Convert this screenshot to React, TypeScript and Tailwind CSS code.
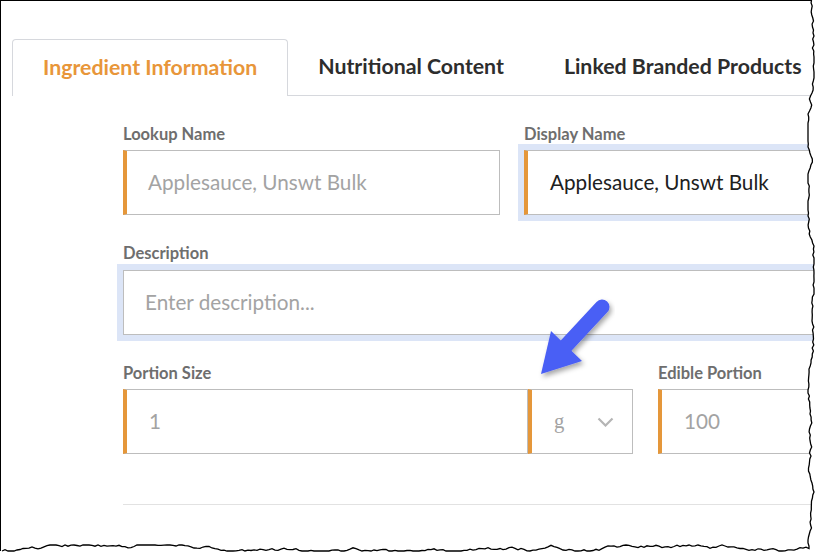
import React from "react";

function makeRng(seed: number) {
  let s = seed;
  return () => {
    s = (s * 1103515245 + 12345) & 0x7fffffff;
    return s / 0x7fffffff;
  };
}

const rnd = makeRng(11);
const rightPts: [number, number][] = [];
let v = 0;
for (let y = 0; y <= 548; y += 3) {
  v = Math.max(-3, Math.min(3, v + (rnd() - 0.5) * 3.2));
  rightPts.push([811 + v, y]);
}
const bottomPts: [number, number][] = [];
v = 0;
for (let x = rightPts[rightPts.length - 1][0]; x >= 0; x -= 3) {
  v = Math.max(-3, Math.min(3, v + (rnd() - 0.5) * 3.2));
  bottomPts.push([x, 548 + v]);
}
const edge = [...rightPts, ...bottomPts];
const edgeStr = edge.map(([x, y]) => `${x.toFixed(1)},${y.toFixed(1)}`).join(" ");
const lastBottom = bottomPts[bottomPts.length - 1];
const outsideStr = `816,0 ${edgeStr} 0,${lastBottom[1].toFixed(1)} 0,556 816,556`;

const font = { fontFamily: "Lato, 'Open Sans', sans-serif" };

function Label({ children }: { children: React.ReactNode }) {
  return (
    <div className="text-[16.5px] leading-[20px] font-bold text-[#6e6e6e] mb-[6px]">{children}</div>
  );
}

export default function App() {
  return (
    <div className="relative w-[816px] h-[556px] overflow-hidden bg-white" style={font}>
      <div className="absolute inset-0 border-t border-l border-black" />
      {/* Tabs */}
      <div className="flex pt-[39px] pl-[12px] w-[1000px]">
        <div className="h-[57px] px-[30px] flex items-center border border-b-0 border-[#d6d8dd] rounded-t-[4px] text-[21.3px] font-bold text-[#e8963a] bg-white">
          Ingredient Information
        </div>
        <div className="flex-1 flex items-center border-b border-[#d6d8dd] text-[21.3px] font-bold text-[#2d2d2d]">
          <div className="px-[30px]">Nutritional Content</div>
          <div className="px-[30px]">Linked Branded Products</div>
        </div>
      </div>

      {/* Form */}
      <div className="pl-[123px] pt-[28px] w-[1100px]">
        <div className="flex gap-[24px]">
          <div className="w-[377px]">
            <Label>Lookup Name</Label>
            <div className="h-[65px] border border-[#bdbdbd] border-l-4 border-l-[#e5973a] flex items-center pl-[21px] text-[20.7px] text-[#a3a3a3]">
              Applesauce, Unswt Bulk
            </div>
          </div>
          <div className="w-[377px]">
            <Label>Display Name</Label>
            <div className="h-[65px] border border-[#bdbdbd] border-l-4 border-l-[#e5973a] ring-[6px] ring-[#dce5f7] flex items-center pl-[22px] text-[20.7px] text-[#202020]">
              Applesauce, Unswt Bulk
            </div>
          </div>
        </div>

        <div className="mt-[28px]">
          <Label>Description</Label>
          <div className="w-[800px] h-[65px] mt-[7px] border border-[#bdbdbd] ring-[6px] ring-[#dce5f7] flex items-center pl-[21px] text-[20.7px] text-[#a3a3a3]">
            Enter description...
          </div>
        </div>

        <div className="mt-[28px] flex gap-[25px]">
          <div>
            <Label>Portion Size</Label>
            <div className="flex">
              <div className="w-[405px] h-[65px] border border-[#bdbdbd] border-l-4 border-l-[#e5973a] flex items-center pl-[22px] text-[20.7px] text-[#a3a3a3]">
                1
              </div>
              <div className="w-[105px] h-[65px] border border-[#bdbdbd] border-l-4 border-l-[#e5973a] flex items-center justify-between pl-[22px] pr-[18px] text-[20.7px] text-[#a3a3a3]">
                <span style={{ fontFamily: "'Liberation Serif', serif" }}>g</span>
                <svg width="17" height="10" viewBox="0 0 17 10" fill="none">
                  <path d="M1.5 1.5 L8.5 8.5 L15.5 1.5" stroke="#b5b5b5" strokeWidth="2.2" />
                </svg>
              </div>
            </div>
          </div>
          <div>
            <Label>Edible Portion</Label>
            <div className="w-[300px] h-[65px] border border-[#bdbdbd] border-l-4 border-l-[#e5973a] flex items-center pl-[22px] text-[20.7px] text-[#a3a3a3]">
              100
            </div>
          </div>
        </div>

        <div className="mt-[50px] h-px w-[800px] bg-[#e2e2e2]" />
      </div>

      {/* Arrow and torn edge */}
      <svg className="absolute inset-0" width="816" height="556" viewBox="0 0 816 556">
        <defs>
          <filter id="sh" x="-20%" y="-20%" width="140%" height="140%">
            <feDropShadow dx="2" dy="3" stdDeviation="2.5" floodColor="#000" floodOpacity="0.35" />
          </filter>
        </defs>
        <g filter="url(#sh)">
          <line x1="602" y1="307" x2="563" y2="349" stroke="#4a5ef5" strokeWidth="15" strokeLinecap="round" />
          <polygon points="541,374 551,331 582,361" fill="#4a5ef5" />
        </g>
        <polygon points={outsideStr} fill="#ffffff" />
        <polyline points={edgeStr} fill="none" stroke="#000" strokeWidth="1.3" />
      </svg>
    </div>
  );
}
